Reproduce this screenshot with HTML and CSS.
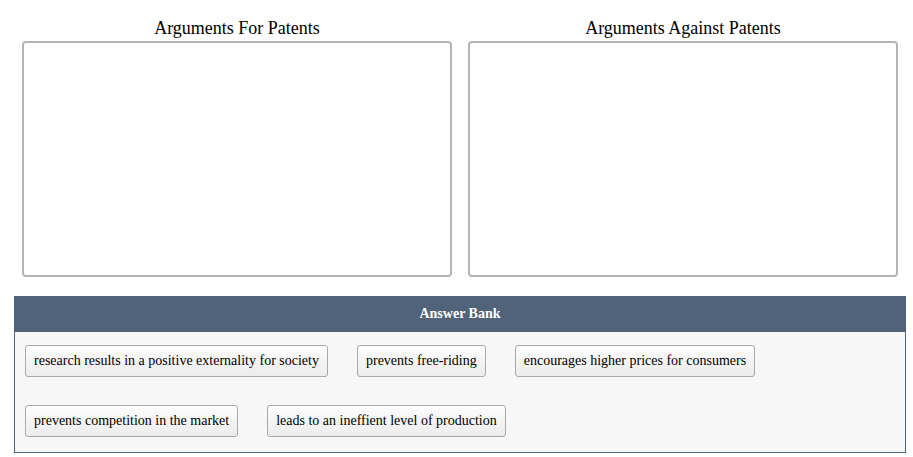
FILE: index.html
```html
<!DOCTYPE html>
<html>
<head>
<meta charset="utf-8">
<link rel="stylesheet" href="styles.css">
</head>
<body>
<div class="page">
  <div class="columns">
    <div class="column">
      <div class="col-title">Arguments For Patents</div>
      <div class="dropzone"></div>
    </div>
    <div class="column">
      <div class="col-title">Arguments Against Patents</div>
      <div class="dropzone"></div>
    </div>
  </div>
  <div class="bank">
    <div class="bank-header">Answer Bank</div>
    <div class="bank-body">
      <div class="chip">research results in a positive externality for society</div>
      <div class="chip">prevents free-riding</div>
      <div class="chip">encourages higher prices for consumers</div>
      <div class="chip">prevents competition in the market</div>
      <div class="chip">leads to an ineffient level of production</div>
    </div>
  </div>
</div>
</body>
</html>
```
FILE: styles.css
```css
html, body {
  margin: 0;
  padding: 0;
  background: #ffffff;
}
body {
  font-family: "Liberation Serif", "Times New Roman", serif;
  color: #000;
}
.page {
  padding: 17px 7px 0 14px;
  width: 892px;
}
.columns {
  display: grid;
  grid-template-columns: 430px 430px;
  column-gap: 16px;
  padding: 0 8px;
}
.col-title {
  font-size: 18px;
  line-height: 22px;
  text-align: center;
  margin-bottom: 2px;
}
.dropzone {
  height: 232px;
  border: 2px solid #b5b5b5;
  border-radius: 4px;
  background: #fff;
}
.bank {
  margin-top: 19px;
}
.bank-header {
  background: #506379;
  color: #fff;
  font-weight: bold;
  font-size: 14px;
  height: 36px;
  line-height: 36px;
  text-align: center;
}
.bank-body {
  background: #f7f7f7;
  border: 1px solid #506379;
  border-top: none;
  padding: 13px 10px 15px 10px;
  display: flex;
  flex-wrap: wrap;
  column-gap: 29px;
  row-gap: 28px;
}
.chip {
  font-size: 14px;
  line-height: 30px;
  height: 30px;
  padding: 0 8px;
  border: 1px solid #a9a9a9;
  border-radius: 3px;
  background: linear-gradient(#fdfdfd, #ececec);
  white-space: nowrap;
}
```
